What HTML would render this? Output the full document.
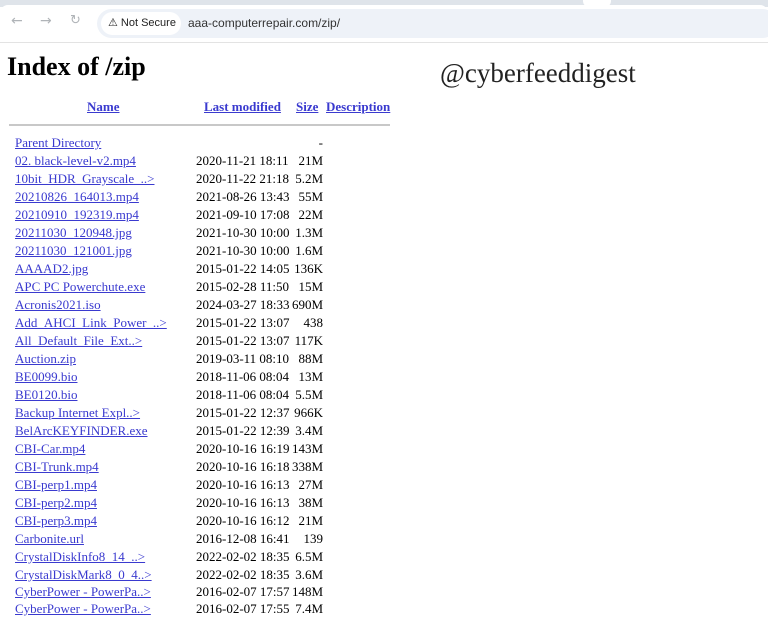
<!DOCTYPE html>
<html><head><meta charset="utf-8"><style>
*{margin:0;padding:0;box-sizing:border-box}
body{width:768px;height:619px;overflow:hidden;background:#fff;position:relative;font-family:"Liberation Serif",serif;color:#000}
.top{position:absolute;left:0;top:0;width:768px;height:7px;background:#dfe4ea}
.tab{position:absolute;top:0;left:583px;width:28px;height:7px;background:#fff;border-radius:0 0 6px 6px}
.bar{position:absolute;left:0;top:5px;width:768px;height:38px;background:#fff;border-radius:8px 8px 0 0;border-bottom:1px solid #e3e3e3}
.pill{position:absolute;left:97px;top:9px;width:680px;height:29px;background:#eef2f8;border-radius:15px}
.chip{position:absolute;left:101px;top:12px;width:80px;height:23px;background:#fff;border-radius:12px;font:11px "Liberation Sans",sans-serif;line-height:23px;padding-left:7px;color:#222}
.url{position:absolute;left:188px;top:12px;font:12px "Liberation Sans",sans-serif;line-height:23px;color:#333}
.nav{position:absolute;top:13px;font:14px "DejaVu Sans",sans-serif;color:#b0b4b8}
h1{position:absolute;left:7px;top:52px;font-size:26px;font-weight:bold}
.wm{position:absolute;left:440px;top:58px;font-size:27px;color:#222}
a{color:#3a3acf;text-decoration:underline}
.h{position:absolute;top:99px;font-size:13px;font-weight:bold}
.hr{position:absolute;left:9px;top:124px;width:381px;height:2px;background:#c8c8c8}
.r{position:absolute;left:0;height:18px;line-height:18px;font-size:13px;width:400px}
.r a{position:absolute;left:15px}
.r .d{position:absolute;left:196px}
.r .s{position:absolute;right:77px}
</style></head><body>
<div class="top"></div><div class="tab"></div>
<div class="bar"></div>
<div class="nav" style="left:11px">←</div>
<div class="nav" style="left:40px">→</div>
<div class="nav" style="left:70px;font-size:13px">↻</div>
<div class="pill"></div>
<div class="chip">⚠ Not Secure</div>
<div class="url">aaa-computerrepair.com/zip/</div>
<h1>Index of /zip</h1>
<div class="wm">@cyberfeeddigest</div>
<a class="h" style="left:87px">Name</a>
<a class="h" style="left:204px">Last modified</a>
<a class="h" style="left:296px">Size</a>
<a class="h" style="left:326px">Description</a>
<div class="hr"></div>
<div class="r" style="top:134px"><a>Parent Directory</a><span class="s">-</span></div>
<div class="r" style="top:152px"><a>02. black-level-v2.mp4</a><span class="d">2020-11-21 18:11</span><span class="s">21M</span></div>
<div class="r" style="top:170px"><a>10bit_HDR_Grayscale_..&gt;</a><span class="d">2020-11-22 21:18</span><span class="s">5.2M</span></div>
<div class="r" style="top:188px"><a>20210826_164013.mp4</a><span class="d">2021-08-26 13:43</span><span class="s">55M</span></div>
<div class="r" style="top:206px"><a>20210910_192319.mp4</a><span class="d">2021-09-10 17:08</span><span class="s">22M</span></div>
<div class="r" style="top:224px"><a>20211030_120948.jpg</a><span class="d">2021-10-30 10:00</span><span class="s">1.3M</span></div>
<div class="r" style="top:242px"><a>20211030_121001.jpg</a><span class="d">2021-10-30 10:00</span><span class="s">1.6M</span></div>
<div class="r" style="top:260px"><a>AAAAD2.jpg</a><span class="d">2015-01-22 14:05</span><span class="s">136K</span></div>
<div class="r" style="top:278px"><a>APC PC Powerchute.exe</a><span class="d">2015-02-28 11:50</span><span class="s">15M</span></div>
<div class="r" style="top:296px"><a>Acronis2021.iso</a><span class="d">2024-03-27 18:33</span><span class="s">690M</span></div>
<div class="r" style="top:314px"><a>Add_AHCI_Link_Power_..&gt;</a><span class="d">2015-01-22 13:07</span><span class="s">438</span></div>
<div class="r" style="top:332px"><a>All_Default_File_Ext..&gt;</a><span class="d">2015-01-22 13:07</span><span class="s">117K</span></div>
<div class="r" style="top:350px"><a>Auction.zip</a><span class="d">2019-03-11 08:10</span><span class="s">88M</span></div>
<div class="r" style="top:368px"><a>BE0099.bio</a><span class="d">2018-11-06 08:04</span><span class="s">13M</span></div>
<div class="r" style="top:386px"><a>BE0120.bio</a><span class="d">2018-11-06 08:04</span><span class="s">5.5M</span></div>
<div class="r" style="top:404px"><a>Backup Internet Expl..&gt;</a><span class="d">2015-01-22 12:37</span><span class="s">966K</span></div>
<div class="r" style="top:422px"><a>BelArcKEYFINDER.exe</a><span class="d">2015-01-22 12:39</span><span class="s">3.4M</span></div>
<div class="r" style="top:440px"><a>CBI-Car.mp4</a><span class="d">2020-10-16 16:19</span><span class="s">143M</span></div>
<div class="r" style="top:458px"><a>CBI-Trunk.mp4</a><span class="d">2020-10-16 16:18</span><span class="s">338M</span></div>
<div class="r" style="top:476px"><a>CBI-perp1.mp4</a><span class="d">2020-10-16 16:13</span><span class="s">27M</span></div>
<div class="r" style="top:494px"><a>CBI-perp2.mp4</a><span class="d">2020-10-16 16:13</span><span class="s">38M</span></div>
<div class="r" style="top:512px"><a>CBI-perp3.mp4</a><span class="d">2020-10-16 16:12</span><span class="s">21M</span></div>
<div class="r" style="top:530px"><a>Carbonite.url</a><span class="d">2016-12-08 16:41</span><span class="s">139</span></div>
<div class="r" style="top:548px"><a>CrystalDiskInfo8_14_..&gt;</a><span class="d">2022-02-02 18:35</span><span class="s">6.5M</span></div>
<div class="r" style="top:566px"><a>CrystalDiskMark8_0_4..&gt;</a><span class="d">2022-02-02 18:35</span><span class="s">3.6M</span></div>
<div class="r" style="top:583px"><a>CyberPower - PowerPa..&gt;</a><span class="d">2016-02-07 17:57</span><span class="s">148M</span></div>
<div class="r" style="top:600px"><a>CyberPower - PowerPa..&gt;</a><span class="d">2016-02-07 17:55</span><span class="s">7.4M</span></div>
</body></html>
